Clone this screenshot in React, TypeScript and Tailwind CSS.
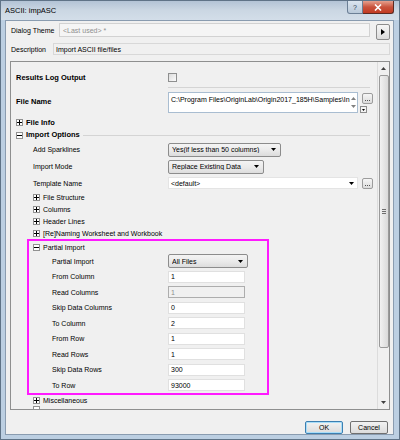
import React from "react";

const DownArrow = ({ color = "#000" }: { color?: string }) => (
  <svg width="5" height="3" viewBox="0 0 5 3" className="shrink-0">
    <path d="M0 0H5L2.5 3Z" fill={color} />
  </svg>
);

const UpArrow = ({ color = "#000" }: { color?: string }) => (
  <svg width="5" height="3" viewBox="0 0 5 3" className="shrink-0">
    <path d="M0 3H5L2.5 0Z" fill={color} />
  </svg>
);

function Expander({ open = false }: { open?: boolean }) {
  return (
    <span className="w-[7px] h-[7px] border border-[#919191] bg-white flex items-center justify-center shrink-0">
      <svg width="5" height="5" viewBox="0 0 5 5">
        <path d="M0 2.5H5" stroke="#000" strokeWidth="1" />
        {!open && <path d="M2.5 0V5" stroke="#000" strokeWidth="1" />}
      </svg>
    </span>
  );
}

function DotsButton() {
  return (
    <div className="w-[11px] h-[11px] rounded-[2px] border border-[#9c9c9c] bg-gradient-to-b from-[#f6f6f6] to-[#dcdcdc] flex items-end justify-center pb-[2px]">
      <svg width="5" height="1" viewBox="0 0 5 1">
        <path d="M0 0H1V1H0ZM2 0H3V1H2ZM4 0H5V1H4Z" fill="#555" />
      </svg>
    </div>
  );
}

function DropList({ text, w }: { text: string; w: string }) {
  return (
    <div
      className={`${w} h-[14px] rounded-[2px] border border-[#8c8c8c] bg-gradient-to-b from-[#f4f4f4] via-[#ebebeb] to-[#dcdcdc] flex items-center pl-[3px] pr-[4px]`}
    >
      <span className="flex-1 truncate">{text}</span>
      <DownArrow />
    </div>
  );
}

function TextBox({ value, disabled = false }: { value: string; disabled?: boolean }) {
  return (
    <div
      className={`w-[77px] h-[12px] border flex items-center pl-[2px] ${
        disabled ? "border-[#adadad] bg-[#f0f0f0] text-[#8d8d8d]" : "border-[#e0e0e0] bg-white"
      }`}
    >
      {value}
    </div>
  );
}

function Leaf({ label, h, children }: { label: string; h: string; children?: React.ReactNode }) {
  return (
    <div className={`${h} flex items-center`}>
      <span className="w-[157px] pl-[22px] shrink-0">{label}</span>
      {children}
    </div>
  );
}

function Branch({ label, h, open = false, bold = false, pl }: { label: string; h: string; open?: boolean; bold?: boolean; pl: string }) {
  return (
    <div className={`${h} ${pl} flex items-center gap-[3px]`}>
      <Expander open={open} />
      <span className={bold ? "font-bold text-[7.5px]" : ""}>{label}</span>
    </div>
  );
}

const partialRows = [
  { label: "From Column", value: "1", h: "h-[15px]" },
  { label: "Read Columns", value: "1", h: "h-[16px]", disabled: true },
  { label: "Skip Data Columns", value: "0", h: "h-[15px]" },
  { label: "To Column", value: "2", h: "h-[16px]" },
  { label: "From Row", value: "1", h: "h-[15px]" },
  { label: "Read Rows", value: "1", h: "h-[16px]" },
  { label: "Skip Data Rows", value: "300", h: "h-[15px]" },
  { label: "To Row", value: "93000", h: "h-[16px]" },
];

export default function App() {
  return (
    <div className="w-[400px] h-[440px] flex flex-col bg-[#bccfe2] border border-[#5f7387] font-['Liberation_Sans',Arial,sans-serif] text-[7px] leading-none text-black overflow-hidden">
      {/* Title bar */}
      <div className="h-[19px] shrink-0 flex bg-gradient-to-b from-[#b3c3d5] via-[#cbd7e3] to-[#d3dee9]">
        <span className="pl-[4px] self-center text-[7.5px] text-black">ASCII: impASC</span>
        <div className="ml-auto mr-[5px] flex self-start">
          <div className="w-[16px] h-[13px] rounded-bl-[3px] border border-t-0 border-[#6b7f95] bg-gradient-to-b from-[#dbe5ef] to-[#b9c9d9] flex items-center justify-center text-[7px] text-[#2c3e50]">
            ?
          </div>
          <div className="w-[31px] h-[13px] rounded-br-[3px] border border-t-0 border-l-0 border-[#5b2a22] bg-gradient-to-b from-[#e5a08f] via-[#c9533d] to-[#c23a22] flex items-center justify-center">
            <svg width="8" height="7" viewBox="0 0 8 7">
              <path d="M1 0.5L7 6.5M7 0.5L1 6.5" stroke="#fff" strokeWidth="1.6" />
            </svg>
          </div>
        </div>
      </div>

      {/* Client area */}
      <div className="ml-[4px] mr-[5px] mb-[4px] flex-1 flex flex-col bg-[#f0f0f0] border border-[#8a9cb0]">
        {/* Dialog Theme */}
        <div className="mt-[2px] h-[17px] flex pl-[5px]">
          <span className="w-[48px] h-[14px] flex items-center">Dialog Theme</span>
          <div className="w-[311px] h-[14px] border border-[#d2d2d2] bg-[#f5f5f5] flex items-center pl-[3px] text-[#8f8f8f]">
            &lt;Last used&gt; *
          </div>
          <div className="ml-[6px] mt-[1px] w-[14px] h-[16px] rounded-[2px] border border-[#8c8c8c] bg-gradient-to-b from-[#f6f6f6] to-[#dcdcdc] flex items-center justify-center">
            <svg width="4" height="6" viewBox="0 0 4 6">
              <path d="M0 0L4 3L0 6Z" fill="#000" />
            </svg>
          </div>
        </div>

        {/* Description */}
        <div className="mt-[3px] h-[12px] flex pl-[5px]">
          <span className="w-[42px] flex items-center">Description</span>
          <div className="w-[337px] border border-[#d8d8d8] bg-[#f0f0f0] flex items-center pl-[2px]">
            Import ASCII file/files
          </div>
        </div>

        {/* Tree panel */}
        <div className="mt-[6px] ml-[4px] w-[380px] h-[349px] border border-[#8e8f8f] flex overflow-hidden">
          <div className="flex-1 flex flex-col overflow-hidden">
            <div className="h-[7px] shrink-0" />
            <div className="h-[17px] shrink-0 flex items-center">
              <span className="w-[157px] pl-[5px] font-bold text-[7.5px]">Results Log Output</span>
              <span className="w-[9px] h-[9px] border border-[#8e8f8f] bg-gradient-to-br from-[#dcdcdc] to-[#fbfbfb]" />
            </div>
            <div className="h-[2px] shrink-0 flex items-center pl-[157px] pr-[7px]">
              <div className="flex-1 h-px bg-[#d4d4d4]" />
            </div>
            <div className="h-[28px] shrink-0 flex">
              <span className="w-[157px] pl-[5px] self-center font-bold text-[7.5px]">File Name</span>
              <div className="mt-[4px] w-[190px] h-[21px] border border-[#a9bdd1] bg-white flex">
                <span className="flex-1 pl-[2px] pt-[3px] whitespace-nowrap">
                  C:\Program Files\OriginLab\Origin2017_185H\Samples\In
                </span>
                <div className="w-[8px] flex flex-col items-center justify-between py-[4px]">
                  <UpArrow color="#808080" />
                  <DownArrow color="#808080" />
                </div>
              </div>
              <div className="ml-[2px] mt-[5px] flex flex-col">
                <div className="ml-[2px]">
                  <DotsButton />
                </div>
                <div className="mt-[2px] w-[7px] h-[7px] border border-[#8c8c8c] bg-[#f4f4f4] flex items-center justify-center">
                  <svg width="3" height="2" viewBox="0 0 3 2">
                    <path d="M0 0H3L1.5 2Z" fill="#000" />
                  </svg>
                </div>
              </div>
            </div>
            <Branch label="File Info" h="h-[13px] shrink-0" pl="pl-[5px]" bold />
            <div className="h-[12px] shrink-0 flex items-center gap-[3px] pl-[5px] pr-[7px]">
              <Expander open />
              <span className="font-bold text-[7.5px]">Import Options</span>
              <div className="flex-1 h-px bg-[#d4d4d4]" />
            </div>
            <Leaf label="Add Sparklines" h="h-[17px] shrink-0">
              <DropList text="Yes(if less than 50 columns)" w="w-[113px]" />
            </Leaf>
            <Leaf label="Import Mode" h="h-[17px] shrink-0">
              <DropList text="Replace Existing Data" w="w-[96px]" />
            </Leaf>
            <Leaf label="Template Name" h="h-[16px] shrink-0">
              <div className="w-[190px] h-[12px] border border-[#e4e4e4] bg-white flex items-center pl-[2px] pr-[3px]">
                <span className="flex-1">&lt;default&gt;</span>
                <DownArrow />
              </div>
              <div className="ml-[4px]">
                <DotsButton />
              </div>
            </Leaf>
            <Branch label="File Structure" h="h-[12px] shrink-0" pl="pl-[22px]" />
            <Branch label="Columns" h="h-[12px] shrink-0" pl="pl-[22px]" />
            <Branch label="Header Lines" h="h-[12px] shrink-0" pl="pl-[22px]" />
            <Branch label="[Re]Naming Worksheet and Workbook" h="h-[12px] shrink-0" pl="pl-[22px]" />

            {/* Highlighted Partial Import */}
            <div className="ml-[16px] w-[242px] shrink-0 border-2 border-[#ff1aff] flex flex-col">
              <Branch label="Partial Import" h="h-[12px]" pl="pl-[4px]" open />
              <div className="h-[16px] flex items-center">
                <span className="w-[139px] pl-[23px]">Partial Import</span>
                <DropList text="All Files" w="w-[80px]" />
              </div>
              {partialRows.map((r) => (
                <div key={r.label} className={`${r.h} flex items-center`}>
                  <span className="w-[139px] pl-[23px]">{r.label}</span>
                  <TextBox value={r.value} disabled={r.disabled} />
                </div>
              ))}
            </div>

            <Branch label="Miscellaneous" h="h-[10px] shrink-0" pl="pl-[22px]" />
            <div className="h-[4px] shrink-0 pl-[22px] pt-[1px] flex items-start overflow-hidden">
              <span className="w-[7px] h-[3px] border border-b-0 border-[#919191] bg-white" />
            </div>
          </div>

          {/* Scrollbar */}
          <div className="w-[12px] flex flex-col bg-[#f0f0f0] border-l border-[#dcdcdc]">
            <div className="h-[13px] flex items-center justify-center">
              <UpArrow color="#404040" />
            </div>
            <div className="ml-[1px] w-[10px] h-[273px] rounded-[2px] border border-[#9a9a9a] bg-gradient-to-r from-[#f2f2f2] to-[#dadada] flex flex-col items-center justify-center gap-[1px]">
              <div className="w-[4px] h-px bg-[#6e6e6e]" />
              <div className="w-[4px] h-px bg-[#6e6e6e]" />
              <div className="w-[4px] h-px bg-[#6e6e6e]" />
            </div>
            <div className="flex-1" />
            <div className="h-[13px] flex items-center justify-center">
              <DownArrow color="#404040" />
            </div>
          </div>
        </div>

        {/* Buttons */}
        <div className="mt-[11px] h-[13px] flex justify-end gap-[7px] pr-[5px]">
          <div className="w-[38px] h-[13px] rounded-[2px] border border-[#3c7fb1] bg-gradient-to-b from-[#f2f2f2] to-[#dcdcdc] shadow-[inset_0_0_0_1px_#a8ddf8] flex items-center justify-center">
            OK
          </div>
          <div className="w-[38px] h-[13px] rounded-[2px] border border-[#707070] bg-gradient-to-b from-[#f2f2f2] to-[#dcdcdc] flex items-center justify-center">
            Cancel
          </div>
        </div>
      </div>
    </div>
  );
}
